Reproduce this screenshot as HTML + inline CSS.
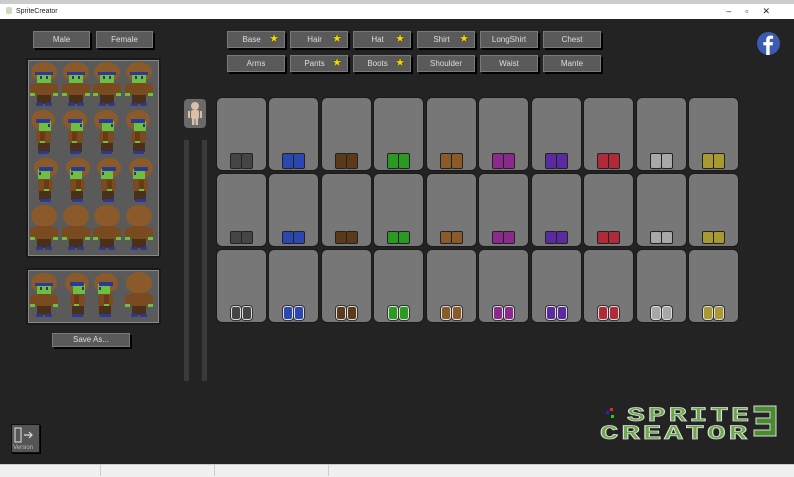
<!DOCTYPE html>
<html><head><style>
body{margin:0;width:794px;height:476px;overflow:hidden;background:#232323;font-family:"Liberation Sans",sans-serif;position:relative}
.a{position:absolute}
.btn{position:absolute;height:15px;background:#5a5a5a;border:1px solid #7a7a7a;box-shadow:2px 2px 0 #000;color:#ddd;font-size:8px;line-height:15px;text-align:center;box-sizing:content-box}
.star{position:absolute;right:5px;top:2px;color:#f5d800;font-size:11px;line-height:11px;text-shadow:0 0 1px #000}
.cell{position:absolute;width:49px;height:72px;background:#777;border-radius:5px;box-shadow:0 0 0 1px #1a1a1a}
.bt{position:absolute;left:13px;top:55px;width:22px;height:14px}
</style></head><body>
<div class="a" style="left:0;top:0;width:794px;height:4px;background:#ccc"></div>
<div class="a" style="left:0;top:4px;width:794px;height:15px;background:#fff;font-size:7px;line-height:15px;color:#222"><span style="display:inline-block;width:6px;height:7px;background:#cdb;margin:0 4px 0 6px;vertical-align:-1px;border-radius:2px"></span>SpriteCreator<span style="position:absolute;right:10px;top:0;font-size:9px;letter-spacing:14px">–▫✕</span></div>

<svg width="0" height="0" style="position:absolute"><defs>
<g id="cf"><ellipse cx="15" cy="11" rx="13" ry="10" fill="#8a5a2a"/><rect x="8" y="12" width="14" height="10" fill="#6cc040"/><rect x="6" y="11" width="18" height="3" fill="#2a3a9a"/><rect x="11" y="15" width="2" height="3" fill="#3a2a8a"/><rect x="17" y="15" width="2" height="3" fill="#3a2a8a"/><rect x="5" y="22" width="20" height="12" rx="3" fill="#7a4a20"/><rect x="1" y="23" width="5" height="10" fill="#7a4a20"/><rect x="24" y="23" width="5" height="10" fill="#7a4a20"/><rect x="1" y="32" width="5" height="3" fill="#6cc040"/><rect x="24" y="32" width="5" height="3" fill="#6cc040"/><rect x="8" y="34" width="14" height="9" fill="#4a3018"/><rect x="7" y="42" width="7" height="3" fill="#2a3a9a"/><rect x="16" y="42" width="7" height="3" fill="#2a3a9a"/></g>
<g id="cs"><ellipse cx="14" cy="11" rx="12" ry="10" fill="#8a5a2a"/><rect x="10" y="12" width="12" height="10" fill="#6cc040"/><rect x="7" y="10" width="14" height="4" fill="#2a3a9a"/><rect x="19" y="15" width="2" height="3" fill="#3a2a8a"/><rect x="7" y="22" width="15" height="12" rx="3" fill="#7a4a20"/><rect x="11" y="23" width="5" height="10" fill="#6a3a18"/><rect x="11" y="32" width="5" height="3" fill="#6cc040"/><rect x="9" y="34" width="12" height="9" fill="#4a3018"/><rect x="9" y="42" width="11" height="3" fill="#2a3a9a"/></g>
<g id="cb"><ellipse cx="15" cy="11" rx="13" ry="11" fill="#8a5a2a"/><rect x="5" y="21" width="20" height="13" rx="3" fill="#7a4a20"/><rect x="1" y="23" width="5" height="10" fill="#7a4a20"/><rect x="24" y="23" width="5" height="10" fill="#7a4a20"/><rect x="1" y="32" width="5" height="3" fill="#6cc040"/><rect x="24" y="32" width="5" height="3" fill="#6cc040"/><rect x="8" y="34" width="14" height="9" fill="#4a3018"/><rect x="7" y="42" width="7" height="3" fill="#2a3a9a"/><rect x="16" y="42" width="7" height="3" fill="#2a3a9a"/></g>
</defs></svg>

<div class="btn" style="left:33px;top:31px;width:55px">Male</div>
<div class="btn" style="left:96px;top:31px;width:55px">Female</div>

<div class="btn" style="left:227px;top:31px;width:56px">Base&nbsp;&nbsp;&nbsp;&nbsp;<span class="star">★</span></div>
<div class="btn" style="left:290px;top:31px;width:56px">Hair&nbsp;&nbsp;&nbsp;&nbsp;<span class="star">★</span></div>
<div class="btn" style="left:353px;top:31px;width:56px">Hat&nbsp;&nbsp;&nbsp;&nbsp;<span class="star">★</span></div>
<div class="btn" style="left:417px;top:31px;width:56px">Shirt&nbsp;&nbsp;&nbsp;&nbsp;<span class="star">★</span></div>
<div class="btn" style="left:480px;top:31px;width:56px">LongShirt</div>
<div class="btn" style="left:543px;top:31px;width:56px">Chest</div>
<div class="btn" style="left:227px;top:55px;width:56px">Arms</div>
<div class="btn" style="left:290px;top:55px;width:56px">Pants&nbsp;&nbsp;&nbsp;&nbsp;<span class="star">★</span></div>
<div class="btn" style="left:353px;top:55px;width:56px">Boots&nbsp;&nbsp;&nbsp;&nbsp;<span class="star">★</span></div>
<div class="btn" style="left:417px;top:55px;width:56px">Shoulder</div>
<div class="btn" style="left:480px;top:55px;width:56px">Waist</div>
<div class="btn" style="left:543px;top:55px;width:56px">Mante</div>

<svg class="a" style="left:757px;top:32px" width="23" height="23" viewBox="0 0 24 24"><circle cx="12" cy="12" r="12" fill="#3b5cb0"/><path d="M13.2 24V14h3l.5-3.4h-3.5V8.6c0-1 .3-1.6 1.7-1.6h1.9V4c-.4 0-1.5-.2-2.8-.2-2.7 0-4.4 1.6-4.4 4.6v2.2H6.6V14h3V24z" fill="#fff"/></svg>

<div class="a" style="left:26px;top:58px;width:131px;height:196px;background:#5a5a5a;border:2px solid #1a1a1a;outline:1px solid #888;outline-offset:-3px"></div>
<svg class="a" style="left:28px;top:60px" width="128" height="194">
<use href="#cf" x="1" y="1"/><use href="#cf" x="33" y="1"/><use href="#cf" x="64" y="1"/><use href="#cf" x="96" y="1"/>
<use href="#cs" x="1" y="49"/><use href="#cs" x="33" y="49"/><use href="#cs" x="64" y="49"/><use href="#cs" x="96" y="49"/>
<g transform="translate(128,0) scale(-1,1)"><use href="#cs" x="1" y="97"/><use href="#cs" x="33" y="97"/><use href="#cs" x="64" y="97"/><use href="#cs" x="96" y="97"/></g>
<use href="#cb" x="1" y="145"/><use href="#cb" x="33" y="145"/><use href="#cb" x="64" y="145"/><use href="#cb" x="96" y="145"/>
</svg>

<div class="a" style="left:26px;top:268px;width:131px;height:53px;background:#5a5a5a;border:2px solid #1a1a1a;outline:1px solid #888;outline-offset:-3px"></div>
<svg class="a" style="left:28px;top:272px" width="128" height="48">
<use href="#cf" x="1" y="0"/><use href="#cs" x="35" y="0"/><g transform="translate(128,0) scale(-1,1)"><use href="#cs" x="36" y="0"/></g><use href="#cb" x="96" y="0"/>
</svg>
<div class="btn" style="left:52px;top:333px;width:76px;height:12px;line-height:12px">Save As...</div>

<div class="a" style="left:184px;top:99px;width:22px;height:29px;background:#6a6a6a;border-radius:4px"></div>
<svg class="a" style="left:188px;top:101px" width="14" height="25"><circle cx="7" cy="5" r="4" fill="#d8bfa8"/><rect x="3" y="9" width="8" height="9" rx="2" fill="#d8bfa8"/><rect x="0" y="10" width="2" height="7" fill="#d8bfa8"/><rect x="12" y="10" width="2" height="7" fill="#d8bfa8"/><rect x="4" y="17" width="2.5" height="7" fill="#d8bfa8"/><rect x="7.5" y="17" width="2.5" height="7" fill="#d8bfa8"/></svg>
<div class="a" style="left:184px;top:140px;width:5px;height:241px;background:#3a3a3a"></div>
<div class="a" style="left:202px;top:140px;width:5px;height:241px;background:#3a3a3a"></div>

<div id="grid"></div>
<script>
var cols=["#454545","#2a48b0","#5a3a18","#2a9a20","#8a5a28","#8a2a8a","#5a2aa0","#b02a3a","#a8a8a8","#a89a30"];
var xs=[217,269,322,374,427,479,532,584,637,689],ys=[98,174,250],h='';
for(var r=0;r<3;r++)for(var c=0;c<10;c++){
 var b;
 if(r<2)b='<div class="bt"><div style="position:absolute;left:0;top:'+(r?2:0)+'px;width:10px;height:'+(r?11:14)+'px;background:'+cols[c]+';border:1px solid #222;border-radius:2px"></div><div style="position:absolute;left:11px;top:'+(r?2:0)+'px;width:10px;height:'+(r?11:14)+'px;background:'+cols[c]+';border:1px solid #222;border-radius:2px"></div></div>';
 else b='<div class="bt"><div style="position:absolute;left:1px;top:1px;width:8px;height:12px;background:'+cols[c]+';border:1px solid #ddd;border-radius:3px;box-shadow:0 0 0 1px #333"></div><div style="position:absolute;left:12px;top:1px;width:8px;height:12px;background:'+cols[c]+';border:1px solid #ddd;border-radius:3px;box-shadow:0 0 0 1px #333"></div></div>';
 h+='<div class="cell" style="left:'+xs[c]+'px;top:'+ys[r]+'px">'+b+'</div>';
}
document.getElementById('grid').innerHTML=h;
</script>

<div class="a" style="left:11px;top:424px;width:27px;height:27px;background:#555;border:1px solid #111;box-shadow:1px 1px 0 #000"></div>
<svg class="a" style="left:12px;top:426px" width="26" height="18"><rect x="3" y="2" width="6" height="14" fill="none" stroke="#ccc" stroke-width="1.2"/><path d="M12 9h8M17 6l3 3-3 3" stroke="#ddd" stroke-width="1.2" fill="none"/></svg>
<div class="a" style="left:13px;top:445px;font-size:6px;color:#bbb">Version</div>

<svg class="a" style="left:600px;top:402px" width="182" height="40">
<rect x="10" y="6" width="3" height="3" fill="#e22"/><rect x="6" y="9" width="3" height="3" fill="#22d"/><rect x="11" y="13" width="3" height="3" fill="#2c2"/>
<text x="27" y="19" font-family="Liberation Mono,monospace" font-weight="bold" font-size="20" fill="#6aa84a" stroke="#ddd" stroke-width="0.8" letter-spacing="2" textLength="125" lengthAdjust="spacingAndGlyphs">SPRITE</text>
<text x="0" y="37" font-family="Liberation Mono,monospace" font-weight="bold" font-size="20" fill="#6aa84a" stroke="#ddd" stroke-width="0.8" letter-spacing="2" textLength="150" lengthAdjust="spacingAndGlyphs">CREATOR</text>
<path d="M154 4h22v30h-22v-6h16v-6h-14v-6h14v-6h-16z" fill="#4a8a30" stroke="#ddd" stroke-width="1"/>
</svg>

<div class="a" style="left:0;top:464px;width:794px;height:12px;background:#f0f0f0;border-top:1px solid #ccc"></div>
<div class="a" style="left:100px;top:465px;width:1px;height:11px;background:#ccc"></div>
<div class="a" style="left:214px;top:465px;width:1px;height:11px;background:#ccc"></div>
<div class="a" style="left:328px;top:465px;width:1px;height:11px;background:#ccc"></div>
</body></html>
